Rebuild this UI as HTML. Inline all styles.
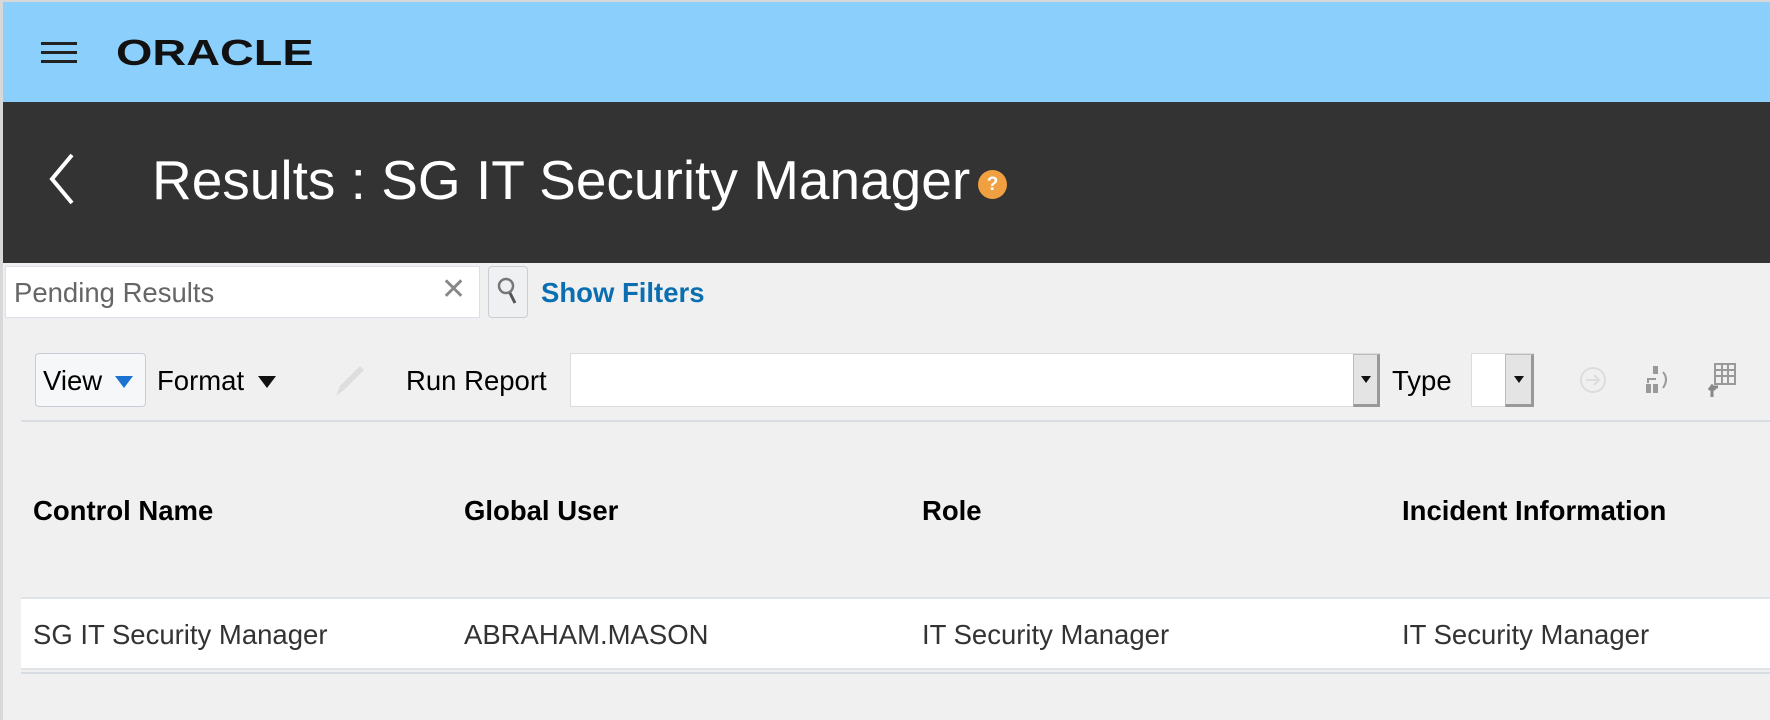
<!DOCTYPE html>
<html><head><meta charset="utf-8"><style>
*{margin:0;padding:0;box-sizing:border-box}
body{width:1770px;height:720px;background:#f0f0f0;font-family:"Liberation Sans",Arial,sans-serif;position:relative;overflow:hidden}
.a{position:absolute}
.t{font-size:27.5px;color:#000;white-space:nowrap}
</style></head><body>
<div class="a" style="left:0;top:0;width:1770px;height:102px;background:#8bd0fc"></div>
<div class="a" style="left:0;top:0;width:1770px;height:2px;background:#d8d8d8"></div>
<div class="a" style="left:0;top:0;width:3px;height:720px;background:#d8d8d8;z-index:5"></div>
<div class="a" style="left:41px;top:42px;width:36px;height:3px;background:#222"></div>
<div class="a" style="left:41px;top:51px;width:36px;height:3px;background:#222"></div>
<div class="a" style="left:41px;top:60px;width:36px;height:3px;background:#222"></div>
<div class="a" style="left:116px;top:32px;font-size:36px;font-weight:bold;color:#111;letter-spacing:0px;transform:scaleX(1.3);transform-origin:left;">ORACLE</div>
<div class="a" style="left:0;top:102px;width:1770px;height:161px;background:#333"></div>
<svg class="a" style="left:42px;top:150px" width="40" height="58"><path d="M30 5 L10 29 L30 53" stroke="#fff" stroke-width="4" fill="none"/></svg>
<div class="a" style="left:152px;top:148px;font-size:55px;color:#fff;white-space:nowrap">Results : SG IT Security Manager</div>
<div class="a" style="left:978px;top:170px;width:29px;height:29px;border-radius:50%;background:#f0a040;color:#fff;font-size:19px;font-weight:bold;text-align:center;line-height:29px">?</div>
<div class="a" style="left:5px;top:266px;width:475px;height:52px;background:#fff;border:1px solid #dde"></div>
<div class="a t" style="left:14px;top:277px;color:#666">Pending Results</div>
<div class="a" style="left:441px;top:272px;font-size:30px;color:#888">✕</div>
<div class="a" style="left:488px;top:266px;width:40px;height:52px;border:1px solid #c8cdd4;border-radius:4px;background:#eef0f2"></div>
<svg class="a" style="left:494px;top:275px" width="30" height="36"><circle cx="12" cy="11" r="7" stroke="#777" stroke-width="2.5" fill="none"/><path d="M16 18 L21 28" stroke="#555" stroke-width="3"/></svg>
<div class="a t" style="left:541px;top:277px;color:#0a6eb0;font-weight:bold">Show Filters</div>
<div class="a" style="left:35px;top:353px;width:111px;height:54px;border:1px solid #c5ced8;border-radius:4px;background:#f5f7f9"></div>
<div class="a t" style="left:43px;top:365px">View</div>
<div class="a" style="left:115px;top:376px;width:0;height:0;border-left:9px solid transparent;border-right:9px solid transparent;border-top:12px solid #1a73d0"></div>
<div class="a t" style="left:157px;top:365px">Format</div>
<div class="a" style="left:258px;top:376px;width:0;height:0;border-left:9px solid transparent;border-right:9px solid transparent;border-top:12px solid #111"></div>
<svg class="a" style="left:330px;top:360px" width="40" height="40"><path d="M6 36 L10 26 L30 6 L34 10 L14 30 Z" fill="#ddd"/></svg>
<div class="a t" style="left:406px;top:365px">Run Report</div>
<div class="a" style="left:570px;top:353px;width:810px;height:54px;background:#fff;border:1px solid #d8dde2"></div>
<div class="a" style="left:1353px;top:354px;width:27px;height:53px;background:#e4e4e4;border:1px solid #bbb;border-bottom:3px solid #999;border-right:3px solid #999"></div>
<div class="a" style="left:1361px;top:376px;border-left:5px solid transparent;border-right:5px solid transparent;border-top:7px solid #111"></div>
<div class="a t" style="left:1392px;top:365px">Type</div>
<div class="a" style="left:1471px;top:353px;width:63px;height:54px;background:#fff;border:1px solid #d8dde2"></div>
<div class="a" style="left:1505px;top:354px;width:29px;height:53px;background:#e4e4e4;border:1px solid #bbb;border-bottom:3px solid #999;border-right:3px solid #999"></div>
<div class="a" style="left:1514px;top:376px;border-left:5px solid transparent;border-right:5px solid transparent;border-top:7px solid #111"></div>
<svg class="a" style="left:1578px;top:365px" width="30" height="30"><circle cx="15" cy="15" r="12" stroke="#ddd" stroke-width="2" fill="none"/><path d="M8 15 H21 M16 10 L21 15 L16 20" stroke="#ddd" stroke-width="2" fill="none"/></svg>
<svg class="a" style="left:1643px;top:364px" width="30" height="34"><rect x="10" y="2" width="5" height="8" fill="#999"/><rect x="3" y="20" width="5" height="9" fill="#999"/><rect x="10" y="20" width="5" height="9" fill="#999"/><path d="M5 19 V15 H13" stroke="#999" stroke-width="2" fill="none"/><path d="M20 8 Q26 15 20 24" stroke="#999" stroke-width="2" fill="none"/></svg>
<svg class="a" style="left:1706px;top:362px" width="34" height="38"><rect x="9" y="2" width="20" height="20" fill="none" stroke="#999" stroke-width="2"/><path d="M9 8 H29 M9 14 H29 M16 2 V22 M22 2 V22" stroke="#999" stroke-width="2"/><path d="M6 35 V25 H12 M3 28 L6 24 L9 28" stroke="#888" stroke-width="3" fill="none"/></svg>
<div class="a" style="left:21px;top:420px;width:1749px;height:2px;background:#d7dde3"></div>
<div class="a t" style="left:33px;top:495px;font-weight:bold">Control Name</div>
<div class="a t" style="left:464px;top:495px;font-weight:bold">Global User</div>
<div class="a t" style="left:922px;top:495px;font-weight:bold">Role</div>
<div class="a t" style="left:1402px;top:495px;font-weight:bold">Incident Information</div>
<div class="a" style="left:21px;top:597px;width:1749px;height:73px;background:#fff;border-top:2px solid #dfe4e8;border-bottom:2px solid #dfe4e8"></div>
<div class="a t" style="left:33px;top:619px;color:#333">SG IT Security Manager</div>
<div class="a t" style="left:464px;top:619px;color:#333">ABRAHAM.MASON</div>
<div class="a t" style="left:922px;top:619px;color:#333">IT Security Manager</div>
<div class="a t" style="left:1402px;top:619px;color:#333">IT Security Manager</div>
<div class="a" style="left:21px;top:672px;width:1749px;height:2px;background:#d7dde3"></div>
</body></html>
